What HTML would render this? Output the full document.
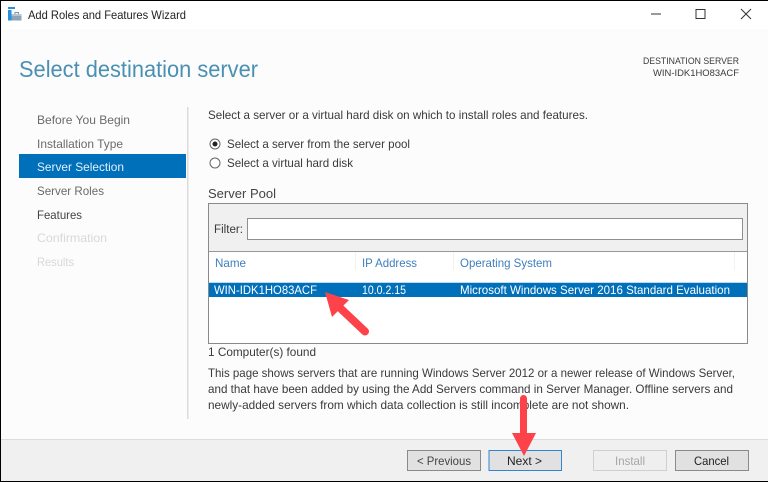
<!DOCTYPE html>
<html><head><meta charset="utf-8"><style>
html,body{margin:0;padding:0;background:#fcfcfc}
svg{display:block}
text{font-family:"Liberation Sans",sans-serif;font-size:12px;fill:#3a3a3a}
</style></head><body>
<svg width="768" height="482" viewBox="0 0 768 482" xmlns="http://www.w3.org/2000/svg">
<rect width="768" height="482" fill="#fcfcfc"/>
<rect width="768" height="29" fill="#fff"/>
<rect y="439" width="768" height="1" fill="#dcdcdc"/>
<rect y="440" width="768" height="42" fill="#f0f0f0"/>
<rect width="768" height="1" fill="#000"/>
<rect width="1" height="482" fill="#000"/>
<rect y="481" width="768" height="1" fill="#000"/>

<!-- app icon -->
<rect x="8" y="7" width="7" height="2" fill="#2a8fdc"/>
<rect x="8" y="10" width="3.500" height="10.500" fill="#2a8fdc"/>
<rect x="11.500" y="16" width="10" height="4.500" fill="#8ba5ba"/>
<rect x="11.500" y="14" width="10" height="2" fill="#b4c5d2"/>
<path d="M15 14v-1.500h3.500V14" fill="none" stroke="#7d91a2" stroke-width="1"/>

<text x="28" y="19" textLength="158" lengthAdjust="spacingAndGlyphs" style="fill:#222">Add Roles and Features Wizard</text>

<!-- window buttons -->
<rect x="651" y="13.500" width="10" height="1" fill="#333"/>
<rect x="696" y="9.500" width="9" height="9" fill="none" stroke="#333"/>
<path d="M741 9l10 10M751 9l-10 10" stroke="#333" stroke-width="1" fill="none"/>

<text x="19" y="77" textLength="239" lengthAdjust="spacingAndGlyphs" style="font-size:23px;fill:#4a90b2">Select destination server</text>
<text x="643" y="64" textLength="96" lengthAdjust="spacingAndGlyphs" style="font-size:9.500px">DESTINATION SERVER</text>
<text x="653" y="76" textLength="86" lengthAdjust="spacingAndGlyphs" style="font-size:9.500px">WIN-IDK1HO83ACF</text>

<!-- sidebar -->
<rect x="19" y="154" width="167" height="24" fill="#0070ba"/>
<rect x="187" y="107" width="1.500" height="312" fill="#dcdcdc"/>
<text x="37" y="124" textLength="93" lengthAdjust="spacingAndGlyphs" style="fill:#6a6a6a">Before You Begin</text>
<text x="37" y="148" textLength="86" lengthAdjust="spacingAndGlyphs" style="fill:#6a6a6a">Installation Type</text>
<text x="37" y="171" textLength="87" lengthAdjust="spacingAndGlyphs" style="fill:#e4eff8">Server Selection</text>
<text x="37" y="195" textLength="67" lengthAdjust="spacingAndGlyphs" style="fill:#6a6a6a">Server Roles</text>
<text x="37" y="219" textLength="45" lengthAdjust="spacingAndGlyphs" style="fill:#444">Features</text>
<text x="37" y="242" textLength="70" lengthAdjust="spacingAndGlyphs" style="fill:#d8d8d8">Confirmation</text>
<text x="37" y="266" textLength="37" lengthAdjust="spacingAndGlyphs" style="fill:#d8d8d8">Results</text>

<!-- main -->
<text x="208" y="119" textLength="380" lengthAdjust="spacingAndGlyphs">Select a server or a virtual hard disk on which to install roles and features.</text>
<circle cx="215" cy="144" r="5" fill="#fff" stroke="#666"/>
<circle cx="215" cy="144" r="2.500" fill="#222"/>
<circle cx="215" cy="163" r="5" fill="#fff" stroke="#666"/>
<text x="227" y="148" textLength="183" lengthAdjust="spacingAndGlyphs">Select a server from the server pool</text>
<text x="227" y="167" textLength="126" lengthAdjust="spacingAndGlyphs">Select a virtual hard disk</text>
<text x="208" y="198" textLength="68" lengthAdjust="spacingAndGlyphs" style="font-size:13px;fill:#444">Server Pool</text>

<rect x="208.500" y="203.500" width="539" height="140" fill="#fff" stroke="#8a8a8a"/>
<rect x="209" y="204" width="538" height="47" fill="#f0f0f0"/>
<rect x="209" y="251" width="538" height="1" fill="#999"/>
<text x="214" y="233" textLength="29" lengthAdjust="spacingAndGlyphs" style="font-size:11.500px">Filter:</text>
<rect x="247.500" y="218.500" width="495" height="21" fill="#fff" stroke="#8f8f8f"/>
<text x="215" y="267" textLength="31" lengthAdjust="spacingAndGlyphs" style="fill:#3d7fbf">Name</text>
<text x="362" y="267" textLength="55" lengthAdjust="spacingAndGlyphs" style="fill:#3d7fbf">IP Address</text>
<text x="460" y="267" textLength="92" lengthAdjust="spacingAndGlyphs" style="fill:#3d7fbf">Operating System</text>
<rect x="355" y="252" width="1" height="18" fill="#f2f2f2"/>
<rect x="453" y="252" width="1" height="18" fill="#f2f2f2"/>
<rect x="734" y="252" width="1" height="18" fill="#f2f2f2"/>
<rect x="209" y="282" width="538" height="1" fill="#bcd9ee"/>
<rect x="209" y="283" width="538" height="14" fill="#0070ba"/>
<text x="214" y="294" textLength="103" lengthAdjust="spacingAndGlyphs" style="fill:#fff">WIN-IDK1HO83ACF</text>
<text x="362" y="294" textLength="44" lengthAdjust="spacingAndGlyphs" style="fill:#fff">10.0.2.15</text>
<text x="460" y="294" textLength="270" lengthAdjust="spacingAndGlyphs" style="fill:#fff">Microsoft Windows Server 2016 Standard Evaluation</text>

<text x="208" y="356" textLength="108" lengthAdjust="spacingAndGlyphs">1 Computer(s) found</text>
<text x="208" y="377" textLength="527" lengthAdjust="spacingAndGlyphs">This page shows servers that are running Windows Server 2012 or a newer release of Windows Server,</text>
<text x="208" y="393" textLength="525" lengthAdjust="spacingAndGlyphs">and that have been added by using the Add Servers command in Server Manager. Offline servers and</text>
<text x="208" y="409" textLength="421" lengthAdjust="spacingAndGlyphs">newly-added servers from which data collection is still incomplete are not shown.</text>

<!-- buttons -->
<rect x="407.500" y="450.500" width="73" height="20" fill="#e1e1e1" stroke="#8a8a8a"/>
<text x="417" y="465" textLength="54" lengthAdjust="spacingAndGlyphs" style="fill:#444">&lt; Previous</text>
<rect x="489" y="450.500" width="72.500" height="20" fill="#e1e1e1" stroke="#2f86d6"/>
<text x="507" y="465" textLength="35" lengthAdjust="spacingAndGlyphs" style="fill:#222">Next &gt;</text>
<rect x="593.500" y="450.500" width="73" height="20" fill="#efefef" stroke="#cfcfcf"/>
<text x="615" y="465" textLength="30" lengthAdjust="spacingAndGlyphs" style="fill:#a6a6a6">Install</text>
<rect x="675.500" y="450.500" width="73" height="20" fill="#e1e1e1" stroke="#8a8a8a"/>
<text x="694" y="465" textLength="35" lengthAdjust="spacingAndGlyphs" style="fill:#222">Cancel</text>

<!-- arrows -->
<path d="M325 292 L349 300 L332 317Z" fill="#fd4249"/>
<path d="M338 306 L365 331.500" stroke="#fd4249" stroke-width="8" stroke-linecap="round" fill="none"/>
<path d="M523.500 398.500 V435" stroke="#fd4249" stroke-width="7" stroke-linecap="round" fill="none"/>
<path d="M512 433 H536 L524 456Z" fill="#fd4249"/>
</svg>
</body></html>
